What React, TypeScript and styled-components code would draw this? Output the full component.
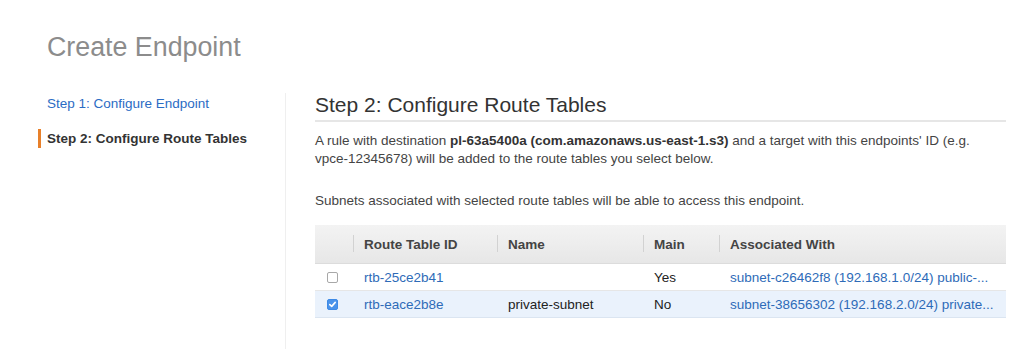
import React from "react";
import styled, { createGlobalStyle } from "styled-components";

const Global = createGlobalStyle`
  html, body { margin: 0; padding: 0; background: #fff; }
  body { font-family: "Liberation Sans", Arial, Helvetica, sans-serif; color: #444; }
`;

const Page = styled.div`
  width: 1024px;
  height: 349px;
  overflow: hidden;
  box-sizing: border-box;
  padding-top: 31px;
`;

const Title = styled.h1`
  margin: 0 0 30px 47px;
  font-size: 26.8px;
  line-height: 32px;
  font-weight: 400;
  color: #8c8c8c;
`;

const Body = styled.div`
  display: flex;
  align-items: stretch;
`;

const Sidebar = styled.nav`
  width: 286px;
  flex: none;
  box-sizing: border-box;
  border-right: 1px solid #efefef;
  padding-top: 1px;
  min-height: 260px;
  display: flex;
  flex-direction: column;
  gap: 16px;
`;

const StepItem = styled.a<{ $active?: boolean }>`
  display: block;
  margin-left: 38px;
  padding-left: 6px;
  border-left: 3px solid ${(p) => (p.$active ? "#e8802a" : "transparent")};
  font-size: 13.5px;
  line-height: 19px;
  font-weight: ${(p) => (p.$active ? 700 : 400)};
  color: ${(p) => (p.$active ? "#333" : "#2b6cc4")};
  text-decoration: none;
`;

const Main = styled.main`
  flex: 1;
  padding: 0 18px 0 29px;
`;

const Heading = styled.h2`
  margin: 0;
  font-size: 21px;
  line-height: 24px;
  font-weight: 400;
  color: #333;
  padding-bottom: 3px;
  border-bottom: 2px solid #e6e6e6;
`;

const Para = styled.p<{ $gap?: number }>`
  margin: ${(p) => p.$gap ?? 0}px 0 0 0;
  font-size: 13.5px;
  line-height: 18px;
  color: #444;
  b { color: #333; }
`;

const Table = styled.table`
  margin-top: 15px;
  width: 100%;
  table-layout: fixed;
  border-collapse: collapse;
  font-size: 13.5px;
`;

const Th = styled.th<{ $sep?: boolean }>`
  position: relative;
  height: 38px;
  padding: 0 0 0 11px;
  text-align: left;
  font-weight: 700;
  font-size: 13.5px;
  color: #444;
  background: linear-gradient(#f3f3f3, #e7e7e7);
  border-bottom: 1px solid #dcdcdc;
  &::before {
    content: "";
    display: ${(p) => (p.$sep ? "block" : "none")};
    position: absolute;
    left: 0;
    top: 10px;
    bottom: 11px;
    width: 1px;
    background: #d2d2d2;
  }
`;

const Tr = styled.tr<{ $selected?: boolean }>`
  background: ${(p) => (p.$selected ? "#eaf2fc" : "#fff")};
  td {
    border-bottom: 1px solid ${(p) => (p.$selected ? "#dbe5f1" : "#e6e6e6")};
  }
`;

const Td = styled.td<{ $link?: boolean }>`
  height: 26px;
  padding: 0 8px 0 11px;
  color: ${(p) => (p.$link ? "#2e6bb8" : "#222")};
  white-space: nowrap;
  overflow: hidden;
  text-overflow: ellipsis;
`;

const CheckCell = styled.td`
  height: 26px;
  padding: 0 0 0 12px;
  line-height: 0;
`;

const Box = styled.span<{ $checked?: boolean }>`
  display: inline-flex;
  align-items: center;
  justify-content: center;
  width: 11px;
  height: 11px;
  box-sizing: border-box;
  border-radius: 2px;
  border: 1px solid ${(p) => (p.$checked ? "#3d8ae6" : "#a8a8a8")};
  background: ${(p) => (p.$checked ? "#4a93ea" : "#fff")};
`;

function Checkbox({ checked }: { checked?: boolean }) {
  return (
    <Box $checked={checked}>
      {checked && (
        <svg width="9" height="9" viewBox="0 0 9 9">
          <path d="M1.8 4.6 L3.7 6.4 L7.2 2.4" fill="none" stroke="#fff" strokeWidth="1.6" strokeLinecap="round" strokeLinejoin="round" />
        </svg>
      )}
    </Box>
  );
}

const rows = [
  { id: "rtb-25ce2b41", name: "", main: "Yes", assoc: "subnet-c26462f8 (192.168.1.0/24) public-...", checked: false },
  { id: "rtb-eace2b8e", name: "private-subnet", main: "No", assoc: "subnet-38656302 (192.168.2.0/24) private...", checked: true },
];

export default function App() {
  return (
    <Page>
      <Global />
      <Title>Create Endpoint</Title>
      <Body>
        <Sidebar>
          <StepItem href="#">Step 1: Configure Endpoint</StepItem>
          <StepItem $active>Step 2: Configure Route Tables</StepItem>
        </Sidebar>
        <Main>
          <Heading>Step 2: Configure Route Tables</Heading>
          <Para $gap={10}>
            A rule with destination <b>pl-63a5400a (com.amazonaws.us-east-1.s3)</b> and a target with this endpoints' ID (e.g.
            <br />
            vpce-12345678) will be added to the route tables you select below.
          </Para>
          <Para $gap={24}>Subnets associated with selected route tables will be able to access this endpoint.</Para>
          <Table>
            <colgroup>
              <col style={{ width: 38 }} />
              <col style={{ width: 144 }} />
              <col style={{ width: 146 }} />
              <col style={{ width: 76 }} />
              <col />
            </colgroup>
            <thead>
              <tr>
                <Th />
                <Th $sep>Route Table ID</Th>
                <Th $sep>Name</Th>
                <Th $sep>Main</Th>
                <Th $sep>Associated With</Th>
              </tr>
            </thead>
            <tbody>
              {rows.map((r) => (
                <Tr key={r.id} $selected={r.checked}>
                  <CheckCell>
                    <Checkbox checked={r.checked} />
                  </CheckCell>
                  <Td $link>{r.id}</Td>
                  <Td>{r.name}</Td>
                  <Td>{r.main}</Td>
                  <Td $link>{r.assoc}</Td>
                </Tr>
              ))}
            </tbody>
          </Table>
        </Main>
      </Body>
    </Page>
  );
}
